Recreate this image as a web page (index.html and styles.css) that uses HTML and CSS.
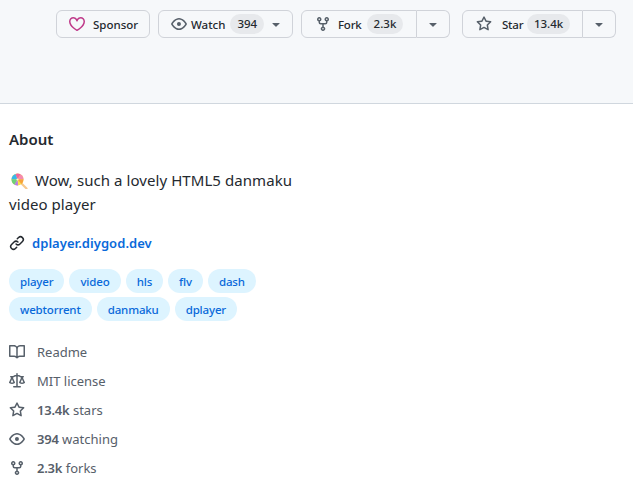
FILE: index.html
```html
<!DOCTYPE html>
<html lang="en">
<head>
<meta charset="utf-8">
<title>DPlayer</title>
<link rel="stylesheet" href="styles.css">
</head>
<body>
<svg class="defs" aria-hidden="true">
  <symbol id="i-heart" viewBox="0 0 16 16"><path d="m8 14.25.345.666a.75.75 0 0 1-.69 0l-.008-.004-.018-.01a7.152 7.152 0 0 1-.31-.17 22.055 22.055 0 0 1-3.434-2.414C2.045 10.731 0 8.35 0 5.5 0 2.836 2.086 1 4.25 1 5.797 1 7.153 1.802 8 3.02 8.847 1.802 10.203 1 11.75 1 13.914 1 16 2.836 16 5.5c0 2.85-2.045 5.231-3.885 6.818a22.066 22.066 0 0 1-3.744 2.584l-.018.01-.006.003h-.002ZM4.25 2.5c-1.336 0-2.75 1.164-2.75 3 0 2.15 1.58 4.144 3.365 5.682A20.58 20.58 0 0 0 8 13.393a20.58 20.58 0 0 0 3.135-2.211C12.92 9.644 14.5 7.65 14.5 5.5c0-1.836-1.414-3-2.75-3-1.373 0-2.609.986-3.029 2.456a.749.749 0 0 1-1.442 0C6.859 3.486 5.623 2.5 4.25 2.5Z"/></symbol>
  <symbol id="i-eye" viewBox="0 0 16 16"><path d="M8 2c1.981 0 3.671.992 4.933 2.078 1.27 1.091 2.187 2.345 2.637 3.023a1.62 1.62 0 0 1 0 1.798c-.45.678-1.367 1.932-2.637 3.023C11.67 13.008 9.981 14 8 14c-1.981 0-3.671-.992-4.933-2.078C1.797 10.83.88 9.576.43 8.898a1.62 1.62 0 0 1 0-1.798c.45-.677 1.367-1.931 2.637-3.022C4.33 2.992 6.019 2 8 2ZM1.679 7.932a.12.12 0 0 0 0 .136c.411.622 1.241 1.75 2.366 2.717C5.176 11.758 6.527 12.5 8 12.5c1.473 0 2.825-.742 3.955-1.715 1.124-.967 1.954-2.096 2.366-2.717a.12.12 0 0 0 0-.136c-.412-.621-1.242-1.75-2.366-2.717C10.824 4.242 9.473 3.5 8 3.5c-1.473 0-2.825.742-3.955 1.715-1.124.967-1.954 2.096-2.366 2.717ZM8 10a2 2 0 1 1-.001-3.999A2 2 0 0 1 8 10Z"/></symbol>
  <symbol id="i-fork" viewBox="0 0 16 16"><path d="M5 5.372v.878c0 .414.336.75.75.75h4.5a.75.75 0 0 0 .75-.75v-.878a2.25 2.25 0 1 1 1.5 0v.878a2.25 2.25 0 0 1-2.25 2.25h-1.5v2.128a2.251 2.251 0 1 1-1.5 0V8.5h-1.5A2.25 2.25 0 0 1 3.5 6.25v-.878a2.25 2.25 0 1 1 1.5 0ZM5 3.25a.75.75 0 1 0-1.5 0 .75.75 0 0 0 1.5 0Zm6.75.75a.75.75 0 1 0 0-1.5.75.75 0 0 0 0 1.5Zm-3 8.75a.75.75 0 1 0-1.5 0 .75.75 0 0 0 1.5 0Z"/></symbol>
  <symbol id="i-star" viewBox="0 0 16 16"><path d="M8 .25a.75.75 0 0 1 .673.418l1.882 3.815 4.21.612a.75.75 0 0 1 .416 1.279l-3.046 2.97.719 4.192a.751.751 0 0 1-1.088.791L8 12.347l-3.766 1.98a.75.75 0 0 1-1.088-.79l.72-4.194L.818 6.374a.75.75 0 0 1 .416-1.28l4.21-.611L7.327.668A.75.75 0 0 1 8 .25Zm0 2.445L6.615 5.5a.75.75 0 0 1-.564.41l-3.097.45 2.24 2.184a.75.75 0 0 1 .216.664l-.528 3.084 2.769-1.456a.75.75 0 0 1 .698 0l2.77 1.456-.53-3.084a.75.75 0 0 1 .216-.664l2.24-2.183-3.096-.45a.75.75 0 0 1-.564-.41L8 2.694Z"/></symbol>
  <symbol id="i-caret" viewBox="0 0 16 16"><path d="m4.427 7.427 3.396 3.396a.25.25 0 0 0 .354 0l3.396-3.396A.25.25 0 0 0 11.396 7H4.604a.25.25 0 0 0-.177.427Z"/></symbol>
  <symbol id="i-link" viewBox="0 0 16 16"><path d="m7.775 3.275 1.25-1.25a3.5 3.5 0 1 1 4.95 4.95l-2.5 2.5a3.5 3.5 0 0 1-4.95 0 .751.751 0 0 1 .018-1.042.751.751 0 0 1 1.042-.018 1.998 1.998 0 0 0 2.83 0l2.5-2.5a2.002 2.002 0 0 0-2.83-2.83l-1.25 1.25a.751.751 0 0 1-1.042-.018.751.751 0 0 1-.018-1.042Zm-4.69 9.64a1.998 1.998 0 0 0 2.83 0l1.25-1.25a.751.751 0 0 1 1.042.018.751.751 0 0 1 .018 1.042l-1.25 1.25a3.5 3.5 0 1 1-4.95-4.95l2.5-2.5a3.5 3.5 0 0 1 4.95 0 .751.751 0 0 1-.018 1.042.751.751 0 0 1-1.042.018 1.998 1.998 0 0 0-2.83 0l-2.5 2.5a1.998 1.998 0 0 0 0 2.83Z"/></symbol>
  <symbol id="i-book" viewBox="0 0 16 16"><path d="M0 1.75A.75.75 0 0 1 .75 1h4.253c1.227 0 2.317.59 3 1.501A3.743 3.743 0 0 1 11.006 1h4.245a.75.75 0 0 1 .75.75v10.5a.75.75 0 0 1-.75.75h-4.507a2.25 2.25 0 0 0-1.591.659l-.622.621a.75.75 0 0 1-1.06 0l-.622-.621A2.25 2.25 0 0 0 5.258 13H.75a.75.75 0 0 1-.75-.75Zm7.251 10.324.004-5.073-.002-2.253A2.25 2.25 0 0 0 5.003 2.5H1.5v9h3.757a3.75 3.75 0 0 1 1.994.574ZM8.755 4.75l-.004 7.322a3.752 3.752 0 0 1 1.992-.572H14.5v-9h-3.495a2.25 2.25 0 0 0-2.25 2.25Z"/></symbol>
  <symbol id="i-law" viewBox="0 0 16 16"><path d="M8.75.75V2h.985c.304 0 .603.08.867.231l1.29.736c.038.022.08.033.124.033h2.234a.75.75 0 0 1 0 1.5h-.427l2.111 4.692a.75.75 0 0 1-.154.838l-.53-.53.529.531-.001.002-.002.002-.006.006-.006.005-.01.01-.045.04c-.21.176-.441.327-.686.45C14.556 10.78 13.88 11 13 11a4.498 4.498 0 0 1-2.023-.454 3.544 3.544 0 0 1-.686-.45l-.045-.04-.016-.015-.006-.006-.004-.004v-.001a.75.75 0 0 1-.154-.838L12.178 4.5h-.162c-.305 0-.604-.079-.868-.231l-1.29-.736a.245.245 0 0 0-.124-.033H8.75V13h2.5a.75.75 0 0 1 0 1.5h-6.5a.75.75 0 0 1 0-1.5h2.5V3.5h-.984a.245.245 0 0 0-.124.033l-1.289.737c-.265.15-.564.23-.869.23h-.162l2.112 4.692a.75.75 0 0 1-.154.838l-.53-.53.529.531-.001.002-.002.002-.006.006-.016.015-.045.04c-.21.176-.441.327-.686.45C4.556 10.78 3.88 11 3 11a4.498 4.498 0 0 1-2.023-.454 3.544 3.544 0 0 1-.686-.45l-.045-.04-.016-.015-.006-.006-.004-.004v-.001a.75.75 0 0 1-.154-.838L2.178 4.5H1.75a.75.75 0 0 1 0-1.5h2.234a.249.249 0 0 0 .125-.033l1.288-.737c.265-.15.564-.23.869-.23h.984V.75a.75.75 0 0 1 1.5 0Zm2.945 8.477c.285.135.718.273 1.305.273s1.02-.138 1.305-.273L13 6.327Zm-10 0c.285.135.718.273 1.305.273s1.02-.138 1.305-.273L3 6.327Z"/></symbol>
</svg>

<header class="topbar">
  <div class="actions">
    <a class="btn btn-sponsor"><svg class="icon icon-heart"><use href="#i-heart"/></svg><span class="btn-label">Sponsor</span></a>
    <a class="btn btn-watch"><svg class="icon"><use href="#i-eye"/></svg><span class="btn-label">Watch</span><span class="counter">394</span><svg class="icon caret"><use href="#i-caret"/></svg></a>
    <div class="split split-fork">
      <a class="btn btn-main"><svg class="icon"><use href="#i-fork"/></svg><span class="btn-label">Fork</span><span class="counter">2.3k</span></a>
      <a class="btn btn-drop"><svg class="icon caret"><use href="#i-caret"/></svg></a>
    </div>
    <div class="split split-star">
      <a class="btn btn-main"><svg class="icon"><use href="#i-star"/></svg><span class="btn-label">Star</span><span class="counter">13.4k</span></a>
      <a class="btn btn-drop"><svg class="icon caret"><use href="#i-caret"/></svg></a>
    </div>
  </div>
</header>

<main class="about">
  <h2 class="about-title">About</h2>
  <p class="about-desc"><svg class="lolly" viewBox="0 0 17 16" aria-hidden="true">
      <path d="M9 9 15.5 15.5" stroke="#f6c98f" stroke-width="2.2" stroke-linecap="round"/>
      <circle cx="6.5" cy="6.5" r="6" fill="#fbe04a"/>
      <path d="M6.5 6.5 4.4.9a6 6 0 0 1 5.2.4Z" fill="#f2669c"/>
      <path d="M6.5 6.5 9.6 1.3a6 6 0 0 1 2.9 5.2Z" fill="#f58ab0"/>
      <path d="M6.5 6.5h6a6 6 0 0 1-2 4.5Z" fill="#f7a23a"/>
      <path d="M6.5 6.5 4.4.9A6 6 0 0 0 .5 6.5Z" fill="#38b6ec"/>
      <path d="M6.5 6.5H.5a6 6 0 0 0 3 5.2Z" fill="#6fd07a"/>
      <path d="M6.5 6.5 3.5 11.7a6 6 0 0 0 3.6.8Z" fill="#b77bea"/>
      <circle cx="6.5" cy="6.5" r="1.1" fill="#fdf3d0"/>
    </svg>Wow, such a lovely HTML5 danmaku<br>video player</p>
  <div class="about-link">
    <svg class="icon icon-link"><use href="#i-link"/></svg>
    <a class="homepage">dplayer.diygod.dev</a>
  </div>
  <div class="topics">
    <a class="topic">player</a>
    <a class="topic">video</a>
    <a class="topic">hls</a>
    <a class="topic">flv</a>
    <a class="topic">dash</a>
    <a class="topic">webtorrent</a>
    <a class="topic">danmaku</a>
    <a class="topic">dplayer</a>
  </div>
  <ul class="stats">
    <li class="stat"><svg class="icon"><use href="#i-book"/></svg><span>Readme</span></li>
    <li class="stat"><svg class="icon"><use href="#i-law"/></svg><span>MIT license</span></li>
    <li class="stat"><svg class="icon"><use href="#i-star"/></svg><span><b>13.4k</b> stars</span></li>
    <li class="stat"><svg class="icon"><use href="#i-eye"/></svg><span><b>394</b> watching</span></li>
    <li class="stat"><svg class="icon"><use href="#i-fork"/></svg><span><b>2.3k</b> forks</span></li>
  </ul>
</main>
</body>
</html>
```

FILE: styles.css
```css
* { box-sizing: border-box; }

html, body {
  margin: 0;
  padding: 0;
  background: #fff;
  overflow: hidden;
}

body {
  font-family: "Noto Sans", "Open Sans", sans-serif;
  color: #24292f;
  width: 633px;
  height: 489px;
}

.defs { display: none; }

.icon {
  width: 16px;
  height: 16px;
  fill: #57606a;
  flex: none;
  display: block;
}

.topbar {
  height: 104px;
  background: #f6f8fa;
  border-bottom: 1px solid #d0d7de;
  padding: 10px 17px 0 0;
}

.actions {
  display: flex;
  justify-content: flex-end;
}

.btn {
  display: flex;
  align-items: center;
  height: 28px;
  background: #f6f8fa;
  border: 1px solid #d0d3d9;
  border-radius: 6px;
  font-size: 11.5px;
  font-weight: 500;
  color: #24292f;
}

.btn-label { white-space: nowrap; }

.btn-sponsor {
  width: 94px;
  padding-left: 12px;
  margin-right: 8px;
}
.btn-sponsor .btn-label { margin-left: 8px; }
.icon-heart { fill: #bf3989; }

.btn-watch {
  width: 135px;
  padding-left: 12px;
  margin-right: 8px;
}
.btn-watch .btn-label { margin-left: 4px; }
.btn-watch .counter { margin-left: 5px; }
.btn-watch .caret { margin-left: 4px; }

.split { display: flex; }
.split-fork { width: 149px; margin-right: 12px; }
.split-star { width: 154px; }

.split .btn-main {
  flex: 1;
  padding-left: 13px;
  border-radius: 6px 0 0 6px;
}
.split-fork .btn-label { margin-left: 7px; letter-spacing: -.2px; }
.split-fork .counter { margin-left: 5px; }
.split-star .btn-label { margin-left: 10px; letter-spacing: -.2px; }
.split-star .counter { margin-left: 4px; padding: 0 6.5px; }

.btn-drop {
  width: 33px;
  flex: none;
  justify-content: center;
  border-left: 0;
  border-radius: 0 6px 6px 0;
}

.counter {
  display: block;
  height: 20px;
  line-height: 20px;
  padding: 0 7px;
  border-radius: 10px;
  background: #e7e9ec;
  font-size: 11.5px;
  font-weight: 500;
}

.about { padding: 0 9px; }

.about-title {
  margin: 24px 0 0;
  font-size: 15px;
  line-height: 22px;
  font-weight: 600;
}

.about-desc {
  margin: 18px 0 0;
  font-size: 15px;
  line-height: 24px;
  letter-spacing: .07px;
}

.lolly {
  display: inline-block;
  width: 17px;
  height: 16px;
  margin: 0 7px 0 2px;
  vertical-align: -3px;
}

.about-link {
  display: flex;
  align-items: center;
  margin-top: 16px;
  height: 22px;
}
.icon-link { fill: #24292f; }
.homepage {
  margin-left: 7px;
  font-size: 13px;
  font-weight: 600;
  letter-spacing: .05px;
  color: #0969da;
}

.topics {
  display: flex;
  flex-wrap: wrap;
  gap: 4px 5px;
  width: 260px;
  margin-top: 15px;
}

.topic {
  height: 24px;
  line-height: 26px;
  padding: 0 11px;
  border-radius: 12px;
  background: #ddf4ff;
  color: #0969da;
  font-size: 11.5px;
  font-weight: 500;
  letter-spacing: -.15px;
}

.stats {
  list-style: none;
  margin: 16px 0 0;
  padding: 0;
}

.stat {
  display: flex;
  align-items: center;
  height: 29px;
  font-size: 13px;
  color: #57606a;
}
.stat .icon { margin-right: 12px; }
.stat b { font-weight: 600; letter-spacing: -.2px; }
```
